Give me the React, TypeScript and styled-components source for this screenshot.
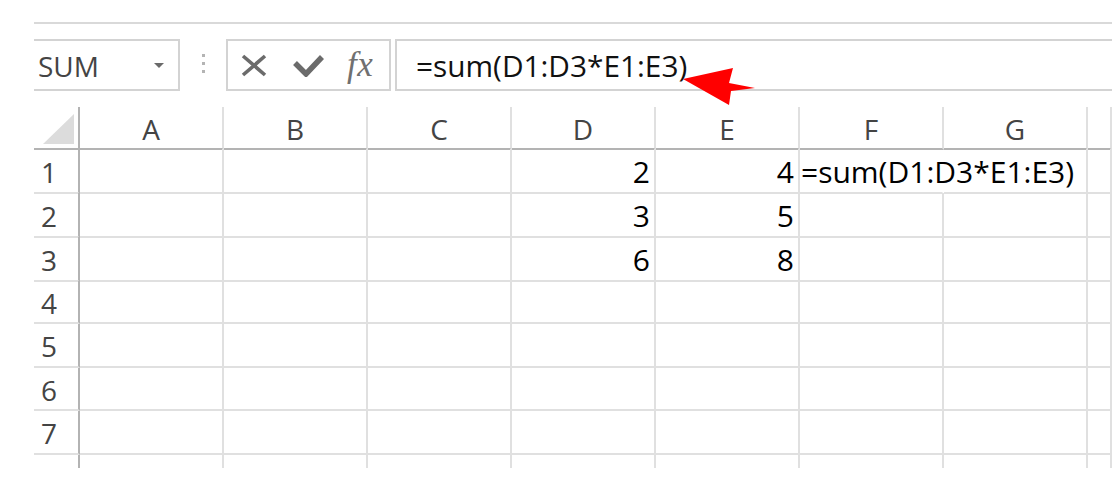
import React from 'react';
import styled, { createGlobalStyle } from 'styled-components';

const Global = createGlobalStyle`
  html, body { margin: 0; padding: 0; background: #ffffff; }
  body { font-family: "Open Sans", "Liberation Sans", sans-serif; }
  #root { width: 1117px; height: 502px; }
`;

const Page = styled.div`
  position: relative;
  width: 1117px;
  height: 502px;
  overflow: hidden;
  background: #fff;
`;

const Sheet = styled.div`
  margin-left: 34px;
  width: 1078px;
  padding-top: 22px;
  overflow: hidden;
`;

const TopRule = styled.div`
  height: 2px;
  background: #d9d9d9;
`;

const FormulaRow = styled.div`
  display: flex;
  height: 52px;
  margin-top: 15px;
`;

const NameBox = styled.div`
  box-sizing: border-box;
  width: 146px;
  display: flex;
  align-items: center;
  border: 2px solid #d3d3d3;
  border-left: none;
  padding-left: 4px;
  padding-top: 2px;
  font-size: 28px;
  color: #444;
`;

const NameText = styled.span`
  flex: 1;
`;

const Caret = styled.span`
  width: 0;
  height: 0;
  border-left: 5.5px solid transparent;
  border-right: 5.5px solid transparent;
  border-top: 5px solid #6a6a6a;
  margin-right: 14px;
  margin-bottom: 2px;
`;

const Grip = styled.div`
  width: 46px;
  display: flex;
  flex-direction: column;
  align-items: center;
  justify-content: center;
  gap: 5px;
  padding-bottom: 4px;
  box-sizing: border-box;
`;

const Dot = styled.span`
  width: 3px;
  height: 3px;
  background: #b4b4b4;
`;

const FnBox = styled.div`
  box-sizing: border-box;
  width: 165px;
  border: 2px solid #d3d3d3;
  display: flex;
  align-items: center;
  padding-left: 13px;
`;

const IconSlot = styled.span<{ $gap: number }>`
  display: flex;
  margin-left: ${(p) => p.$gap}px;
`;

const FxText = styled.span`
  font-family: "Liberation Serif", "DejaVu Serif", serif;
  font-style: italic;
  font-size: 35px;
  color: #707070;
  margin-left: 23px;
  line-height: 1;
  margin-top: -2px;
  letter-spacing: 0.5px;
`;

const FormulaBox = styled.div`
  box-sizing: border-box;
  flex: 1;
  margin-left: 4px;
  margin-right: -10px;
  border: 2px solid #d3d3d3;
  display: flex;
  align-items: center;
  padding-left: 19px;
  padding-top: 1px;
  font-size: 29.8px;
  color: #111;
  white-space: nowrap;
`;

const Grid = styled.div`
  margin-top: 16px;
  height: 361px;
  overflow: hidden;
`;

const RowLine = styled.div<{ $h: number }>`
  display: grid;
  grid-template-columns: 46px repeat(7, 144px) 24px;
  height: ${(p) => p.$h}px;
`;

const Corner = styled.div`
  box-sizing: border-box;
  border-right: 2px solid #b3b3b3;
  border-bottom: 2px solid #b3b3b3;
  display: flex;
  align-items: flex-end;
  justify-content: flex-end;
  padding: 0 4px 4px 0;
`;

const Triangle = styled.span`
  width: 31px;
  height: 30px;
  background: #dcdcdc;
  clip-path: polygon(100% 0, 100% 100%, 0 100%);
`;

const ColHead = styled.div`
  box-sizing: border-box;
  border-right: 2px solid #e0e0e0;
  border-bottom: 2px solid #b3b3b3;
  display: flex;
  align-items: center;
  justify-content: center;
  padding-top: 3px;
  font-size: 28px;
  color: #444;
`;

const RowHead = styled.div`
  box-sizing: border-box;
  border-right: 2px solid #b3b3b3;
  border-bottom: 2px solid #e0e0e0;
  display: flex;
  align-items: center;
  padding-left: 7px;
  padding-top: 2px;
  font-size: 28px;
  color: #444;
`;

const Cell = styled.div<{ $right?: boolean; $spill?: boolean }>`
  box-sizing: border-box;
  border-right: 2px solid ${(p) => (p.$spill ? 'transparent' : '#e0e0e0')};
  border-bottom: 2px solid #e0e0e0;
  display: flex;
  align-items: center;
  justify-content: ${(p) => (p.$right ? 'flex-end' : 'flex-start')};
  padding: 2px ${(p) => (p.$right ? '4px' : '0')} 0 ${(p) => (p.$right ? '0' : '1px')};
  font-size: 30px;
  color: #000;
  white-space: nowrap;
  overflow: visible;
  position: relative;
`;

const Arrow = styled.svg`
  position: absolute;
  left: 680px;
  top: 64px;
`;

const cols = ['A', 'B', 'C', 'D', 'E', 'F', 'G', ''];
const heights = [44, 44, 44, 43, 44, 43, 44, 44];
const data: Record<number, Record<number, string>> = {
  1: { 3: '2', 4: '4', 5: '=sum(D1:D3*E1:E3)' },
  2: { 3: '3', 4: '5' },
  3: { 3: '6', 4: '8' },
};

const XIcon = () => (
  <svg width="26" height="23" viewBox="0 0 26 23">
    <path d="M2 2 L24 21 M24 2 L2 21" stroke="#6b6b6b" strokeWidth="3.6" fill="none" />
  </svg>
);

const CheckIcon = () => (
  <svg width="31" height="24" viewBox="0 0 31 24">
    <path d="M2 10 L13 21 L29 4" stroke="#6b6b6b" strokeWidth="5.5" fill="none" strokeLinejoin="miter" />
  </svg>
);

export default function App() {
  return (
    <>
      <Global />
      <Page>
        <Sheet>
          <TopRule />
          <FormulaRow>
            <NameBox>
              <NameText>SUM</NameText>
              <Caret />
            </NameBox>
            <Grip>
              <Dot />
              <Dot />
              <Dot />
            </Grip>
            <FnBox>
              <IconSlot $gap={0}>
                <XIcon />
              </IconSlot>
              <IconSlot $gap={26}>
                <CheckIcon />
              </IconSlot>
              <FxText>fx</FxText>
            </FnBox>
            <FormulaBox>=sum(D1:D3*E1:E3)</FormulaBox>
          </FormulaRow>
          <Grid>
            <RowLine $h={42}>
              <Corner>
                <Triangle />
              </Corner>
              {cols.map((c, i) => (
                <ColHead key={i}>{c}</ColHead>
              ))}
            </RowLine>
            {heights.map((h, r) => {
              const row = r + 1;
              const rd = data[row] || {};
              return (
                <RowLine key={row} $h={h}>
                  <RowHead>{row}</RowHead>
                  {cols.map((_, ci) => {
                    const v = rd[ci];
                    const isNum = v !== undefined && /^\d+$/.test(v);
                    return (
                      <Cell key={ci} $right={isNum} $spill={v !== undefined && !isNum}>
                        {v}
                      </Cell>
                    );
                  })}
                </RowLine>
              );
            })}
          </Grid>
        </Sheet>
        <Arrow width="80" height="45" viewBox="0 0 80 45">
          <polygon points="3,15 53,4 49,19 75,24 51,27 49,41" fill="#ff0000" />
        </Arrow>
      </Page>
    </>
  );
}
